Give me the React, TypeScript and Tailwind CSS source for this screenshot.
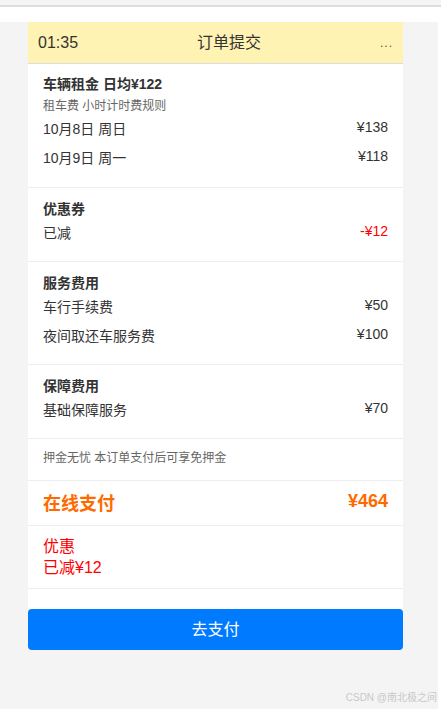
import React from "react";

const font = { fontFamily: '"Liberation Sans", Arial, "Noto Sans CJK SC", sans-serif' };

function Row({ left, right, red }: { left: string; right: string; red?: boolean }) {
  return (
    <div className="flex items-center justify-between h-[29px] text-[14px] text-[#333]">
      <span>{left}</span>
      <span className={"mb-[4px] " + (red ? "text-[#ff0000]" : "text-[#333]")}>{right}</span>
    </div>
  );
}

function Section({ title, children }: { title: string; children: React.ReactNode }) {
  return (
    <div className="px-[15px] pt-[11px] pb-[13px] border-b border-[#eeeeee]">
      <div className="h-[20px] leading-[20px] text-[14px] font-bold text-[#333]">{title}</div>
      {children}
    </div>
  );
}

export default function App() {
  return (
    <div style={font} className="w-[441px] h-[709px] bg-white overflow-hidden">
      <div className="h-[7px] bg-[#f4f4f4] border-b-2 border-[#dddddd]" />
      <div className="h-[15px] bg-white" />
      <div className="flex">
        <div className="w-[438px] h-[687px] bg-[#f4f4f4] relative">
          <div className="ml-[28px] w-[375px]">
            <div className="h-[42px] bg-[#fff3b3] border-b border-[#dcdcdc] flex items-center justify-between pl-[10px] pr-[10px]">
              <span className="text-[16px] text-[#333]">01:35</span>
              <span className="text-[16px] text-[#333]">订单提交</span>
              <span className="text-[12px] text-[#555] tracking-[1px]">...</span>
            </div>
            <div className="bg-white">
              <div className="px-[15px] pt-[10px] pb-[14px] border-b border-[#eeeeee]">
                <div className="h-[20px] leading-[20px] text-[14px] font-bold text-[#333]">车辆租金 日均¥122</div>
                <div className="mt-[4px] h-[16px] leading-[16px] text-[12px] text-[#666]">租车费 小时计时费规则</div>
                <div className="mt-[1px]">
                  <Row left="10月8日 周日" right="¥138" />
                  <Row left="10月9日 周一" right="¥118" />
                </div>
              </div>
              <Section title="优惠券">
                <Row left="已减" right="-¥12" red />
              </Section>
              <Section title="服务费用">
                <Row left="车行手续费" right="¥50" />
                <Row left="夜间取还车服务费" right="¥100" />
              </Section>
              <Section title="保障费用">
                <Row left="基础保障服务" right="¥70" />
              </Section>
              <div className="px-[15px] pt-[11px] pb-[14px] border-b border-[#eeeeee] text-[12px] leading-[16px] text-[#666]">
                押金无忧 本订单支付后可享免押金
              </div>
              <div className="h-[45px] px-[15px] pt-[10px] pb-[8px] border-b border-[#eeeeee] flex items-center justify-between font-bold text-[18px] leading-[26px] text-[#ff6a00]">
                <span>在线支付</span>
                <span className="h-[26px] leading-[20px]">¥464</span>
              </div>
              <div className="px-[15px] pt-[10px] pb-[10px] border-b border-[#eeeeee] text-[16px] leading-[21px] text-[#ff0000]">
                <div>优惠</div>
                <div>已减¥12</div>
              </div>
              <div className="h-[20px]" />
            </div>
            <button className="w-full h-[41px] rounded-[4px] bg-[#007aff] text-white text-[16px] flex items-center justify-center">
              去支付
            </button>
          </div>
          <div className="absolute right-[1px] bottom-[4px] text-[10px] text-[#c8c8c8]">CSDN @南北极之间</div>
        </div>
        <div className="w-[3px] bg-white" />
      </div>
    </div>
  );
}
